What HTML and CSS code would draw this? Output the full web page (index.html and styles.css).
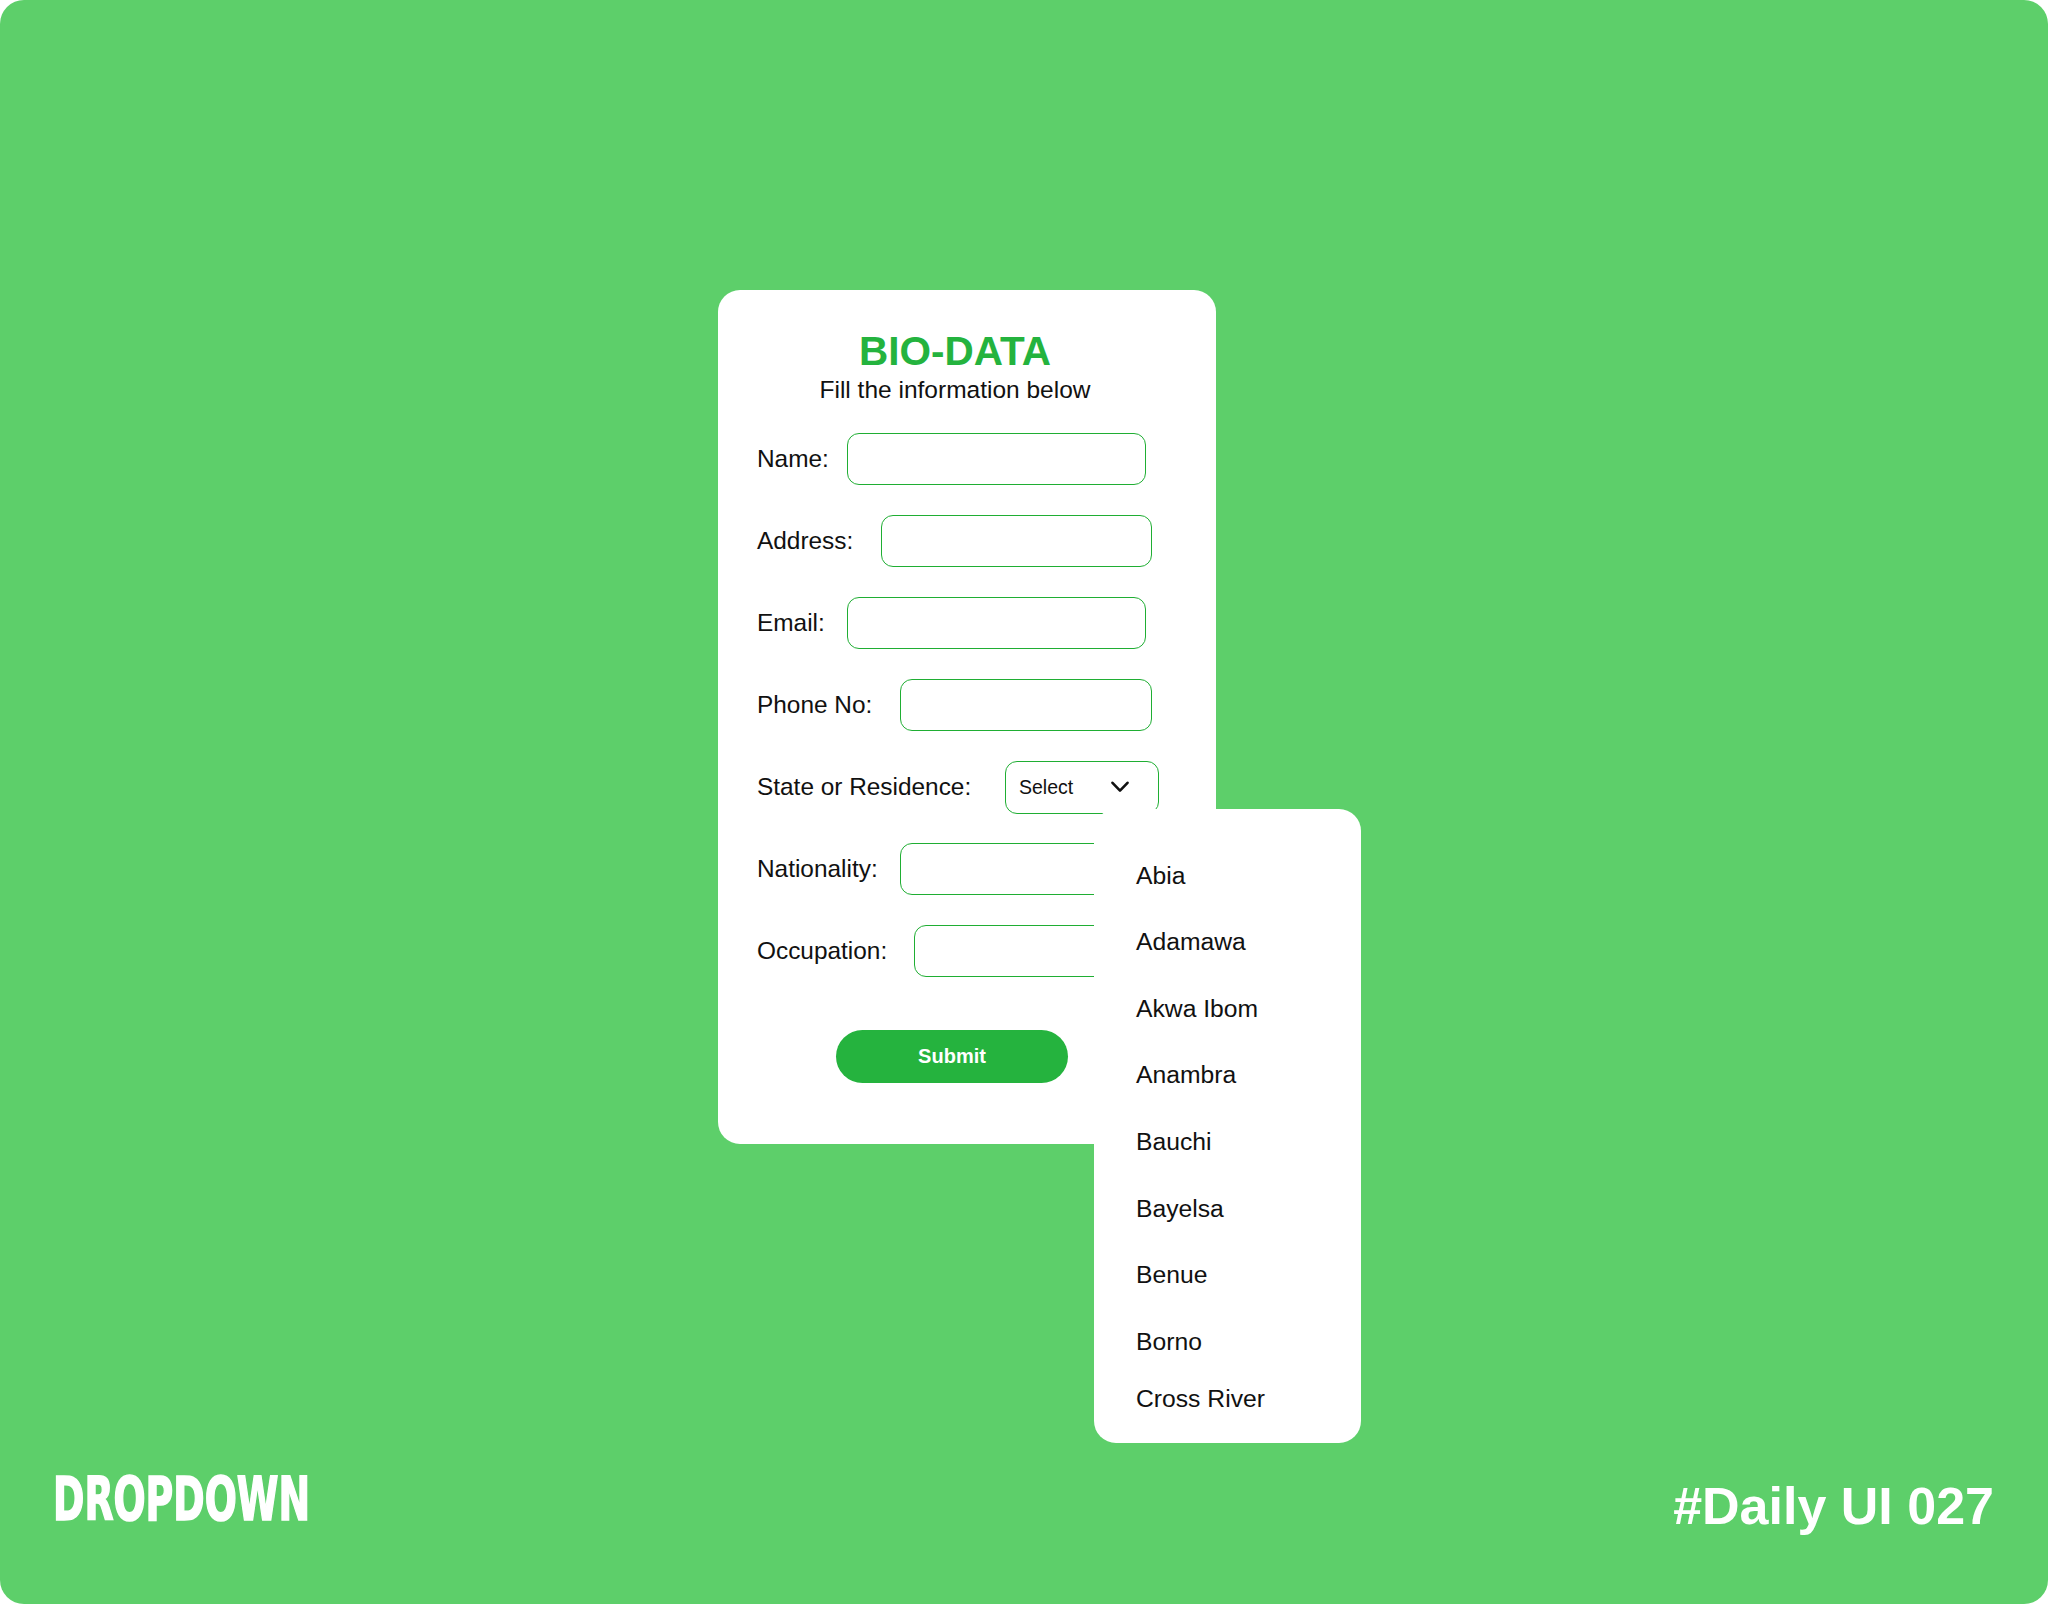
FILE: index.html
```html
<!DOCTYPE html>
<html lang="en">
<head>
<meta charset="utf-8">
<title>Dropdown - Daily UI 027</title>
<link rel="stylesheet" href="styles.css">
</head>
<body>
<div class="frame">
  <main class="stage">
    <section class="card">
      <header class="card-head">
        <h1 class="title">BIO-DATA</h1>
        <p class="subtitle">Fill the information below</p>
      </header>
      <form class="form">
        <div class="row row--name">
          <label class="label">Name:</label>
          <input class="field field--name" type="text">
        </div>
        <div class="row row--address">
          <label class="label">Address:</label>
          <input class="field field--address" type="text">
        </div>
        <div class="row row--email">
          <label class="label">Email:</label>
          <input class="field field--email" type="text">
        </div>
        <div class="row row--phone">
          <label class="label">Phone No:</label>
          <input class="field field--phone" type="text">
        </div>
        <div class="row row--state">
          <label class="label">State or Residence:</label>
          <div class="select">
            <span class="select-value">Select</span>
            <svg class="chevron" width="18" height="12" viewBox="0 0 18 12" aria-hidden="true">
              <path d="M1.5 1.8 L9 9.6 L16.5 1.8" fill="none" stroke="#111" stroke-width="2.6" stroke-linecap="round" stroke-linejoin="round"/>
            </svg>
            <ul class="menu">
              <li class="menu-item">Abia</li>
              <li class="menu-item">Adamawa</li>
              <li class="menu-item">Akwa Ibom</li>
              <li class="menu-item">Anambra</li>
              <li class="menu-item">Bauchi</li>
              <li class="menu-item">Bayelsa</li>
              <li class="menu-item">Benue</li>
              <li class="menu-item">Borno</li>
              <li class="menu-item">Cross River</li>
            </ul>
          </div>
        </div>
        <div class="row row--nationality">
          <label class="label">Nationality:</label>
          <input class="field field--nationality" type="text">
        </div>
        <div class="row row--occupation">
          <label class="label">Occupation:</label>
          <input class="field field--occupation" type="text">
        </div>
        <button class="submit" type="button">Submit</button>
      </form>
    </section>
  </main>
  <footer class="footer">
    <span class="brand">DROPDOWN</span>
    <span class="tag">#Daily UI 027</span>
  </footer>
</div>
</body>
</html>
```

FILE: styles.css
```css
* { box-sizing: border-box; }

html, body {
  margin: 0;
  padding: 0;
  background: #ffffff;
}

body {
  font-family: "Liberation Sans", Arial, sans-serif;
  color: #111111;
}

.frame {
  width: 2048px;
  height: 1604px;
  background: #5dcf6a;
  border-radius: 24px;
  display: flex;
  flex-direction: column;
  overflow: hidden;
}

.stage {
  flex: 1;
  padding: 290px 0 0 718px;
}

.card {
  width: 498px;
  background: #ffffff;
  border-radius: 22px;
  padding: 38.5px 69px 61px 39px;
}

.card-head {
  text-align: center;
  padding-left: 6px;
}

.title {
  margin: 0;
  font-size: 40.5px;
  line-height: 45px;
  font-weight: 700;
  color: #24b33e;
}

.subtitle {
  margin: 2px 0 0;
  font-size: 24.5px;
  line-height: 28px;
  color: #111111;
}

.form {
  margin: 29.5px 0 0;
  display: flex;
  flex-direction: column;
  gap: 30px;
}

.row {
  display: flex;
  align-items: center;
  height: 52px;
}

.label {
  flex-shrink: 0;
  font-size: 24.4px;
  line-height: 28px;
  color: #111111;
  white-space: nowrap;
}

.row--name .label { width: 90px; }
.row--address .label { width: 124px; }
.row--email .label { width: 90px; }
.row--phone .label { width: 143px; }
.row--state .label { width: 248px; }
.row--nationality .label { width: 143px; }
.row--occupation .label { width: 157px; }

.field {
  flex-shrink: 0;
  height: 52px;
  border: 1.8px solid #1fae33;
  border-radius: 12px;
  background: #ffffff;
  outline: none;
  padding: 0 14px;
  font: inherit;
}

.field--name { width: 299px; }
.field--address { width: 271px; }
.field--email { width: 299px; }
.field--phone { width: 252px; }
.field--nationality { width: 252px; }
.field--occupation { width: 238px; }

.select {
  position: relative;
  flex-shrink: 0;
  width: 154px;
  height: 53px;
  border: 1.8px solid #1fae33;
  border-radius: 12px;
  display: flex;
  align-items: center;
  padding: 0 29px 0 13px;
}

.select-value {
  font-size: 19.5px;
  line-height: 22px;
  color: #111111;
}

.chevron {
  margin-left: auto;
  display: block;
}

.menu {
  position: absolute;
  left: 88px;
  top: 47.5px;
  z-index: 2;
  width: 267px;
  margin: 0;
  padding: 52.5px 0 30px 42px;
  list-style: none;
  background: #ffffff;
  border-radius: 22px;
  display: flex;
  flex-direction: column;
  gap: 38.67px;
}

.menu-item {
  font-size: 24.7px;
  line-height: 28px;
  color: #111111;
  white-space: nowrap;
}

.menu-item:last-child {
  margin-top: -9.67px;
}

.submit {
  align-self: center;
  margin-top: 23px;
  width: 232px;
  height: 53px;
  border: none;
  border-radius: 27px;
  background: #25b33e;
  color: #ffffff;
  font-family: "Liberation Sans", Arial, sans-serif;
  font-size: 20px;
  font-weight: 700;
  cursor: pointer;
}

.footer {
  display: flex;
  justify-content: space-between;
  align-items: flex-end;
  padding: 0 54px 72px 53px;
}

.brand {
  display: block;
  font-family: "Liberation Sans Narrow", "DejaVu Sans Condensed", "Liberation Sans", sans-serif;
  font-weight: 700;
  font-size: 60px;
  line-height: 60px;
  color: #ffffff;
  -webkit-text-stroke: 1.6px #ffffff;
  transform: scaleX(0.70);
  transform-origin: left bottom;
  margin-bottom: 3px;
}

.tag {
  display: block;
  font-family: "Liberation Sans", Arial, sans-serif;
  font-weight: 700;
  font-size: 52px;
  line-height: 52px;
  color: #ffffff;
}
```
